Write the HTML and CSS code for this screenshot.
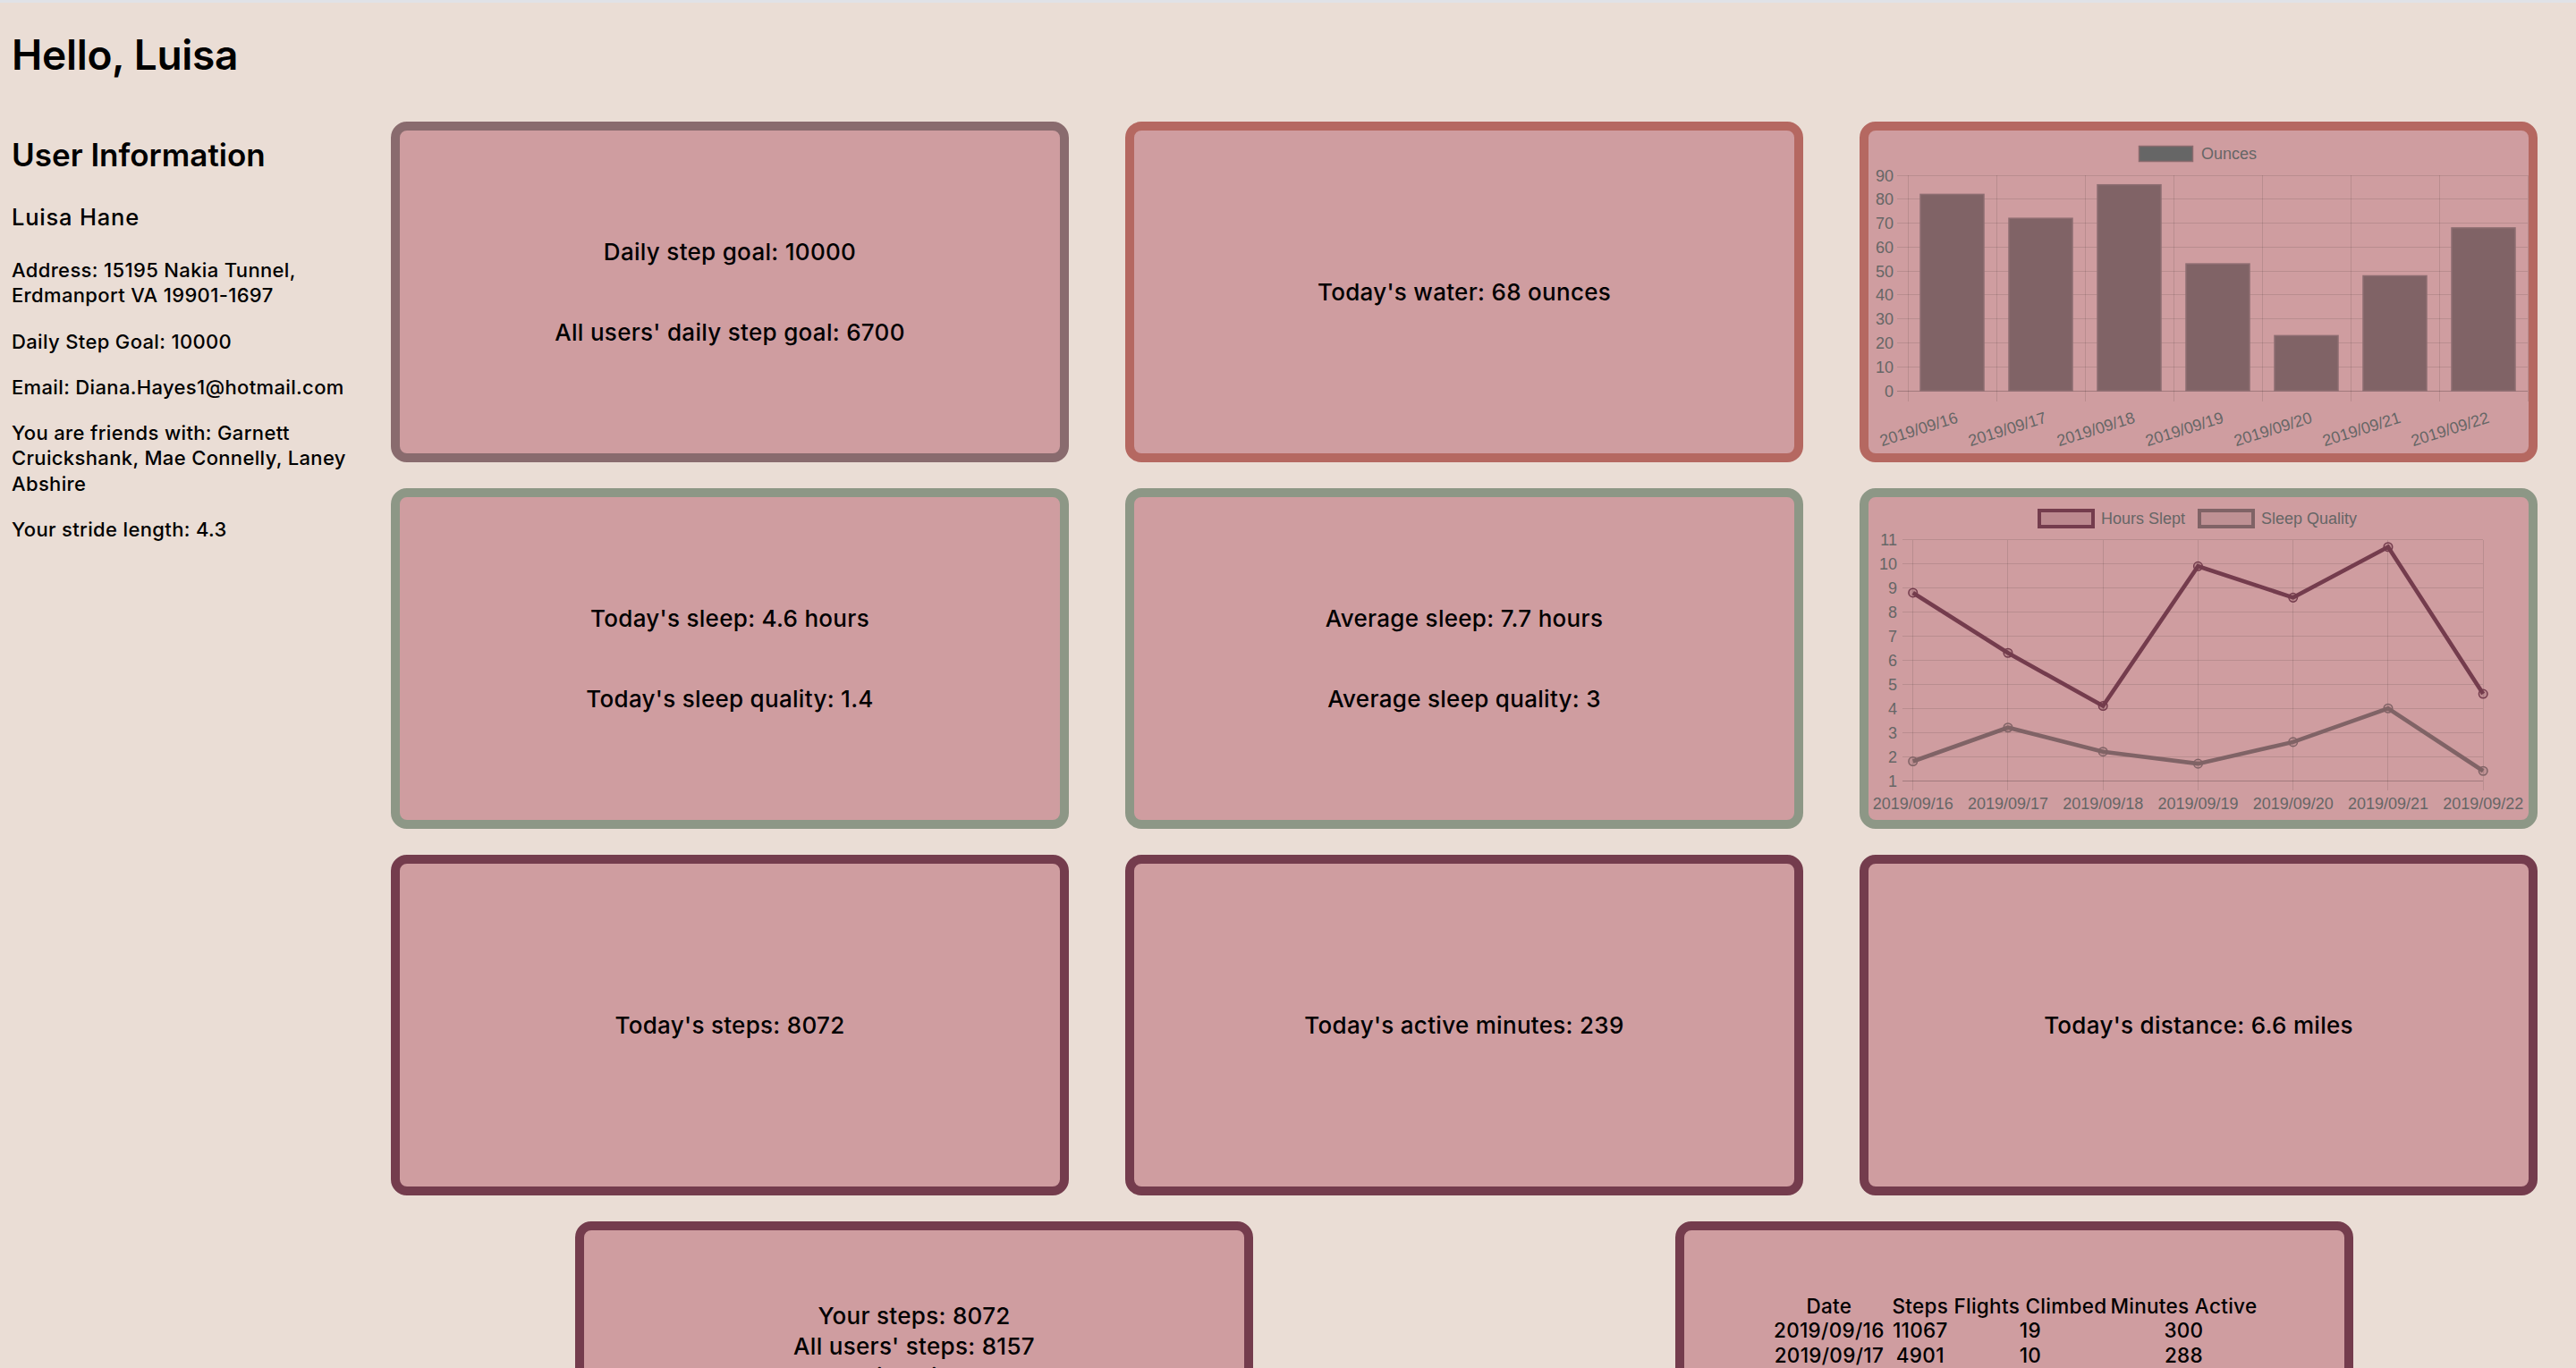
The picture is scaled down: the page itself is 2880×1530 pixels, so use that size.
FILE: index.html
```html
<!DOCTYPE html>
<html lang="en">
<head>
<meta charset="utf-8">
<title>FitLit</title>
<link rel="stylesheet" href="styles.css">
</head>
<body>
<h1 class="greeting">Hello, Luisa</h1>
<div class="layout">
  <aside class="sidebar">
    <h2>User Information</h2>
    <h3>Luisa Hane</h3>
    <p>Address: 15195 Nakia Tunnel, Erdmanport VA 19901-1697</p>
    <p>Daily Step Goal: 10000</p>
    <p>Email: Diana.Hayes1@hotmail.com</p>
    <p>You are friends with: Garnett Cruickshank, Mae Connelly, Laney Abshire</p>
    <p>Your stride length: 4.3</p>
  </aside>
  <main class="dashboard">
    <section class="card b-mauve"><p>Daily step goal: 10000</p><p>All users' daily step goal: 6700</p></section>
    <section class="card b-coral"><p>Today's water: 68 ounces</p></section>
    <section class="card chart b-coral">
      <svg class="chart-svg" viewBox="0 0 738 361">
        <rect x="302.5" y="17.5" width="60" height="17" fill="#666666" stroke="#8a6b6e" stroke-width="1.5"/>
        <text class="ct" x="372" y="32">Ounces</text>
        <g class="grid" shape-rendering="crispEdges">
          <line x1="32" y1="50" x2="737" y2="50"/>
          <line x1="32" y1="76.8" x2="737" y2="76.8"/>
          <line x1="32" y1="103.6" x2="737" y2="103.6"/>
          <line x1="32" y1="130.3" x2="737" y2="130.3"/>
          <line x1="32" y1="157.1" x2="737" y2="157.1"/>
          <line x1="32" y1="183.9" x2="737" y2="183.9"/>
          <line x1="32" y1="210.7" x2="737" y2="210.7"/>
          <line x1="32" y1="237.4" x2="737" y2="237.4"/>
          <line x1="32" y1="264.2" x2="737" y2="264.2"/>
          <line x1="44" y1="50" x2="44" y2="303"/>
          <line x1="143" y1="50" x2="143" y2="303"/>
          <line x1="242" y1="50" x2="242" y2="303"/>
          <line x1="341" y1="50" x2="341" y2="303"/>
          <line x1="440" y1="50" x2="440" y2="303"/>
          <line x1="539" y1="50" x2="539" y2="303"/>
          <line x1="638" y1="50" x2="638" y2="303"/>
          <line x1="737" y1="50" x2="737" y2="303"/>
        </g>
        <line class="zero" x1="32" y1="291" x2="737" y2="291" shape-rendering="crispEdges"/>
        <g class="ct" text-anchor="end">
          <text x="28" y="297.5">0</text>
          <text x="28" y="270.7">10</text>
          <text x="28" y="243.9">20</text>
          <text x="28" y="217.2">30</text>
          <text x="28" y="190.4">40</text>
          <text x="28" y="163.6">50</text>
          <text x="28" y="136.8">60</text>
          <text x="28" y="110.1">70</text>
          <text x="28" y="83.3">80</text>
          <text x="28" y="56.5">90</text>
        </g>
        <g class="bars">
          <rect x="58" y="71.4" width="71" height="219.6"/>
          <rect x="157" y="98.2" width="71" height="192.8"/>
          <rect x="256" y="60.7" width="71" height="230.3"/>
          <rect x="355" y="149.1" width="71" height="141.9"/>
          <rect x="454" y="229.4" width="71" height="61.6"/>
          <rect x="553" y="162.5" width="71" height="128.5"/>
          <rect x="652" y="108.9" width="71" height="182.1"/>
        </g>
        <g class="ct" text-anchor="end">
          <text transform="translate(99 320) rotate(-17.5)" y="6.5">2019/09/16</text>
          <text transform="translate(198 320) rotate(-17.5)" y="6.5">2019/09/17</text>
          <text transform="translate(297 320) rotate(-17.5)" y="6.5">2019/09/18</text>
          <text transform="translate(396 320) rotate(-17.5)" y="6.5">2019/09/19</text>
          <text transform="translate(495 320) rotate(-17.5)" y="6.5">2019/09/20</text>
          <text transform="translate(594 320) rotate(-17.5)" y="6.5">2019/09/21</text>
          <text transform="translate(693 320) rotate(-17.5)" y="6.5">2019/09/22</text>
        </g>
      </svg>
    </section>

    <section class="card b-sage"><p>Today's sleep: 4.6 hours</p><p>Today's sleep quality: 1.4</p></section>
    <section class="card b-sage"><p>Average sleep: 7.7 hours</p><p>Average sleep quality: 3</p></section>
    <section class="card chart b-sage">
      <svg class="chart-svg" viewBox="0 0 738 361">
        <rect x="191" y="15" width="60" height="18" fill="rgba(116,60,77,0.2)" stroke="#743c4d" stroke-width="4"/>
        <text class="ct" x="260" y="30">Hours Slept</text>
        <rect x="370" y="15" width="60" height="18" fill="rgba(128,99,102,0.2)" stroke="#806366" stroke-width="4"/>
        <text class="ct" x="439" y="30">Sleep Quality</text>
        <g class="grid" shape-rendering="crispEdges">
          <line x1="38" y1="47.7" x2="687.2" y2="47.7"/>
          <line x1="38" y1="74.6" x2="687.2" y2="74.6"/>
          <line x1="38" y1="101.6" x2="687.2" y2="101.6"/>
          <line x1="38" y1="128.5" x2="687.2" y2="128.5"/>
          <line x1="38" y1="155.4" x2="687.2" y2="155.4"/>
          <line x1="38" y1="182.4" x2="687.2" y2="182.4"/>
          <line x1="38" y1="209.3" x2="687.2" y2="209.3"/>
          <line x1="38" y1="236.2" x2="687.2" y2="236.2"/>
          <line x1="38" y1="263.1" x2="687.2" y2="263.1"/>
          <line x1="38" y1="290.1" x2="687.2" y2="290.1"/>
          <line x1="49.7" y1="47.7" x2="49.7" y2="328"/>
          <line x1="155.95" y1="47.7" x2="155.95" y2="328"/>
          <line x1="262.2" y1="47.7" x2="262.2" y2="328"/>
          <line x1="368.45" y1="47.7" x2="368.45" y2="328"/>
          <line x1="474.7" y1="47.7" x2="474.7" y2="328"/>
          <line x1="580.95" y1="47.7" x2="580.95" y2="328"/>
          <line x1="687.2" y1="47.7" x2="687.2" y2="328"/>
        </g>
        <line class="zero" x1="38" y1="317" x2="687.2" y2="317" shape-rendering="crispEdges"/>
        <g class="ct" text-anchor="end">
          <text x="32" y="54.2">11</text>
          <text x="32" y="81.1">10</text>
          <text x="32" y="108.1">9</text>
          <text x="32" y="135">8</text>
          <text x="32" y="161.9">7</text>
          <text x="32" y="188.9">6</text>
          <text x="32" y="215.8">5</text>
          <text x="32" y="242.7">4</text>
          <text x="32" y="269.6">3</text>
          <text x="32" y="296.6">2</text>
          <text x="32" y="323.5">1</text>
        </g>
        <g class="ct" text-anchor="middle">
          <text x="49.7" y="349">2019/09/16</text>
          <text x="155.95" y="349">2019/09/17</text>
          <text x="262.2" y="349">2019/09/18</text>
          <text x="368.45" y="349">2019/09/19</text>
          <text x="474.7" y="349">2019/09/20</text>
          <text x="580.95" y="349">2019/09/21</text>
          <text x="687.2" y="349">2019/09/22</text>
        </g>
        <path class="line-q" d="M49.7,295.46 L155.95,257.75 L262.2,284.68 L368.45,298.15 L474.7,273.91 L580.95,236.21 L687.2,306.23"/>
        <g class="pt-q">
          <circle cx="49.7" cy="295.46" r="4.8"/><circle cx="155.95" cy="257.75" r="4.8"/><circle cx="262.2" cy="284.68" r="4.8"/><circle cx="368.45" cy="298.15" r="4.8"/><circle cx="474.7" cy="273.91" r="4.8"/><circle cx="580.95" cy="236.21" r="4.8"/><circle cx="687.2" cy="306.23" r="4.8"/>
        </g>
        <path class="line-h" d="M49.7,106.95 L155.95,174.27 L262.2,233.52 L368.45,77.32 L474.7,112.33 L580.95,55.78 L687.2,220.05"/>
        <g class="pt-h">
          <circle cx="49.7" cy="106.95" r="4.8"/><circle cx="155.95" cy="174.27" r="4.8"/><circle cx="262.2" cy="233.52" r="4.8"/><circle cx="368.45" cy="77.32" r="4.8"/><circle cx="474.7" cy="112.33" r="4.8"/><circle cx="580.95" cy="55.78" r="4.8"/><circle cx="687.2" cy="220.05" r="4.8"/>
        </g>
      </svg>
    </section>

    <section class="card b-wine"><p>Today's steps: 8072</p></section>
    <section class="card b-wine"><p>Today's active minutes: 239</p></section>
    <section class="card b-wine"><p>Today's distance: 6.6 miles</p></section>

    <div class="bottom-row">
      <section class="card stack b-wine">
        <p>Your steps: 8072</p>
        <p>All users' steps: 8157</p>
        <p>Your stairs climbed: 33</p>
        <p>All users' stairs climbed: 20</p>
        <p>Your minutes active: 239</p>
        <p>All users' minutes active: 153</p>
      </section>
      <section class="card b-wine">
        <table class="activity">
          <thead>
            <tr><th>Date</th><th>Steps</th><th>Flights Climbed</th><th>Minutes Active</th></tr>
          </thead>
          <tbody>
            <tr><td>2019/09/16</td><td>11067</td><td>19</td><td>300</td></tr>
            <tr><td>2019/09/17</td><td>4901</td><td>10</td><td>288</td></tr>
            <tr><td>2019/09/18</td><td>5366</td><td>33</td><td>150</td></tr>
            <tr><td>2019/09/19</td><td>3703</td><td>12</td><td>96</td></tr>
            <tr><td>2019/09/20</td><td>9847</td><td>25</td><td>210</td></tr>
            <tr><td>2019/09/21</td><td>12230</td><td>40</td><td>188</td></tr>
            <tr><td>2019/09/22</td><td>8072</td><td>33</td><td>239</td></tr>
          </tbody>
        </table>
      </section>
    </div>
  </main>
</div>
</body>
</html>
```

FILE: styles.css
```css
* {
  box-sizing: border-box;
}

html {
  background: #eaddd5;
}

body {
  margin: 0;
  padding: 0 43px 40px 13px;
  border-top: 3px solid #e0e2e7;
  background: #eaddd5;
  color: #000;
  font-family: Inter, "Noto Sans", sans-serif;
}

.greeting {
  margin: 30px 0 47px;
  font-size: 46px;
  line-height: 56px;
  font-weight: 600;
  letter-spacing: -0.3px;
}

.layout {
  display: flex;
  align-items: flex-start;
  gap: 13px;
}

.sidebar {
  flex: none;
  width: 411px;
  padding-top: 16px;
}

.sidebar h2 {
  margin: 0 0 33px;
  font-size: 35px;
  line-height: 42px;
  font-weight: 600;
}

.sidebar h3 {
  margin: 0 0 30px;
  font-size: 25.5px;
  line-height: 31px;
  font-weight: 500;
  letter-spacing: 0.8px;
}

.sidebar p {
  margin: 0 0 23px;
  font-size: 22px;
  line-height: 28.3px;
  font-weight: 500;
  letter-spacing: 0.35px;
}

.dashboard {
  flex: none;
  width: 2400px;
  display: grid;
  grid-template-columns: repeat(3, 758px);
  grid-auto-rows: 381px;
  column-gap: 63px;
  row-gap: 29px;
}

.card {
  display: flex;
  flex-direction: column;
  align-items: center;
  justify-content: center;
  gap: 58px;
  border: 10px solid #743c4d;
  border-radius: 18px;
  background: #cf9da0;
  font-size: 26px;
  line-height: 32px;
  font-weight: 500;
  letter-spacing: 0.3px;
  text-align: center;
  overflow: hidden;
}

.card p {
  margin: 0;
}

.b-mauve { border-color: #896b6e; }
.b-coral { border-color: #b56861; }
.b-sage { border-color: #8d9786; }
.b-wine { border-color: #743c4d; }

.card.chart {
  display: block;
}

.chart-svg {
  display: block;
  width: 100%;
  height: 100%;
}

.ct {
  font-family: "Liberation Sans", Arial, sans-serif;
  font-size: 18px;
  font-weight: 400;
  fill: #666666;
  letter-spacing: 0;
}

.grid line {
  stroke: rgba(0, 0, 0, 0.1);
  stroke-width: 1;
}

.zero {
  stroke: rgba(0, 0, 0, 0.22);
  stroke-width: 1;
}

.bars rect {
  fill: #806366;
  stroke: #8d6d71;
  stroke-width: 1.5;
}

.line-h {
  fill: none;
  stroke: #743c4d;
  stroke-width: 4.6;
  stroke-linejoin: miter;
}

.line-q {
  fill: none;
  stroke: #806366;
  stroke-width: 4.6;
  stroke-linejoin: miter;
}

.pt-h circle {
  fill: rgba(116, 60, 77, 0.2);
  stroke: #743c4d;
  stroke-width: 1.5;
}

.pt-q circle {
  fill: rgba(128, 99, 102, 0.2);
  stroke: #806366;
  stroke-width: 1.5;
}

.bottom-row {
  grid-column: 1 / -1;
  display: flex;
  justify-content: center;
  gap: 472px;
}

.bottom-row .card {
  flex: none;
  width: 758px;
  height: 381px;
}

.card.stack {
  gap: 0;
}

.card.stack p {
  line-height: 34px;
}

.activity {
  border-spacing: 2px;
  font-size: 22.5px;
  line-height: 23.5px;
  letter-spacing: 0.3px;
}

.activity th,
.activity td {
  padding: 1px;
  font-weight: 500;
  text-align: center;
}
```
